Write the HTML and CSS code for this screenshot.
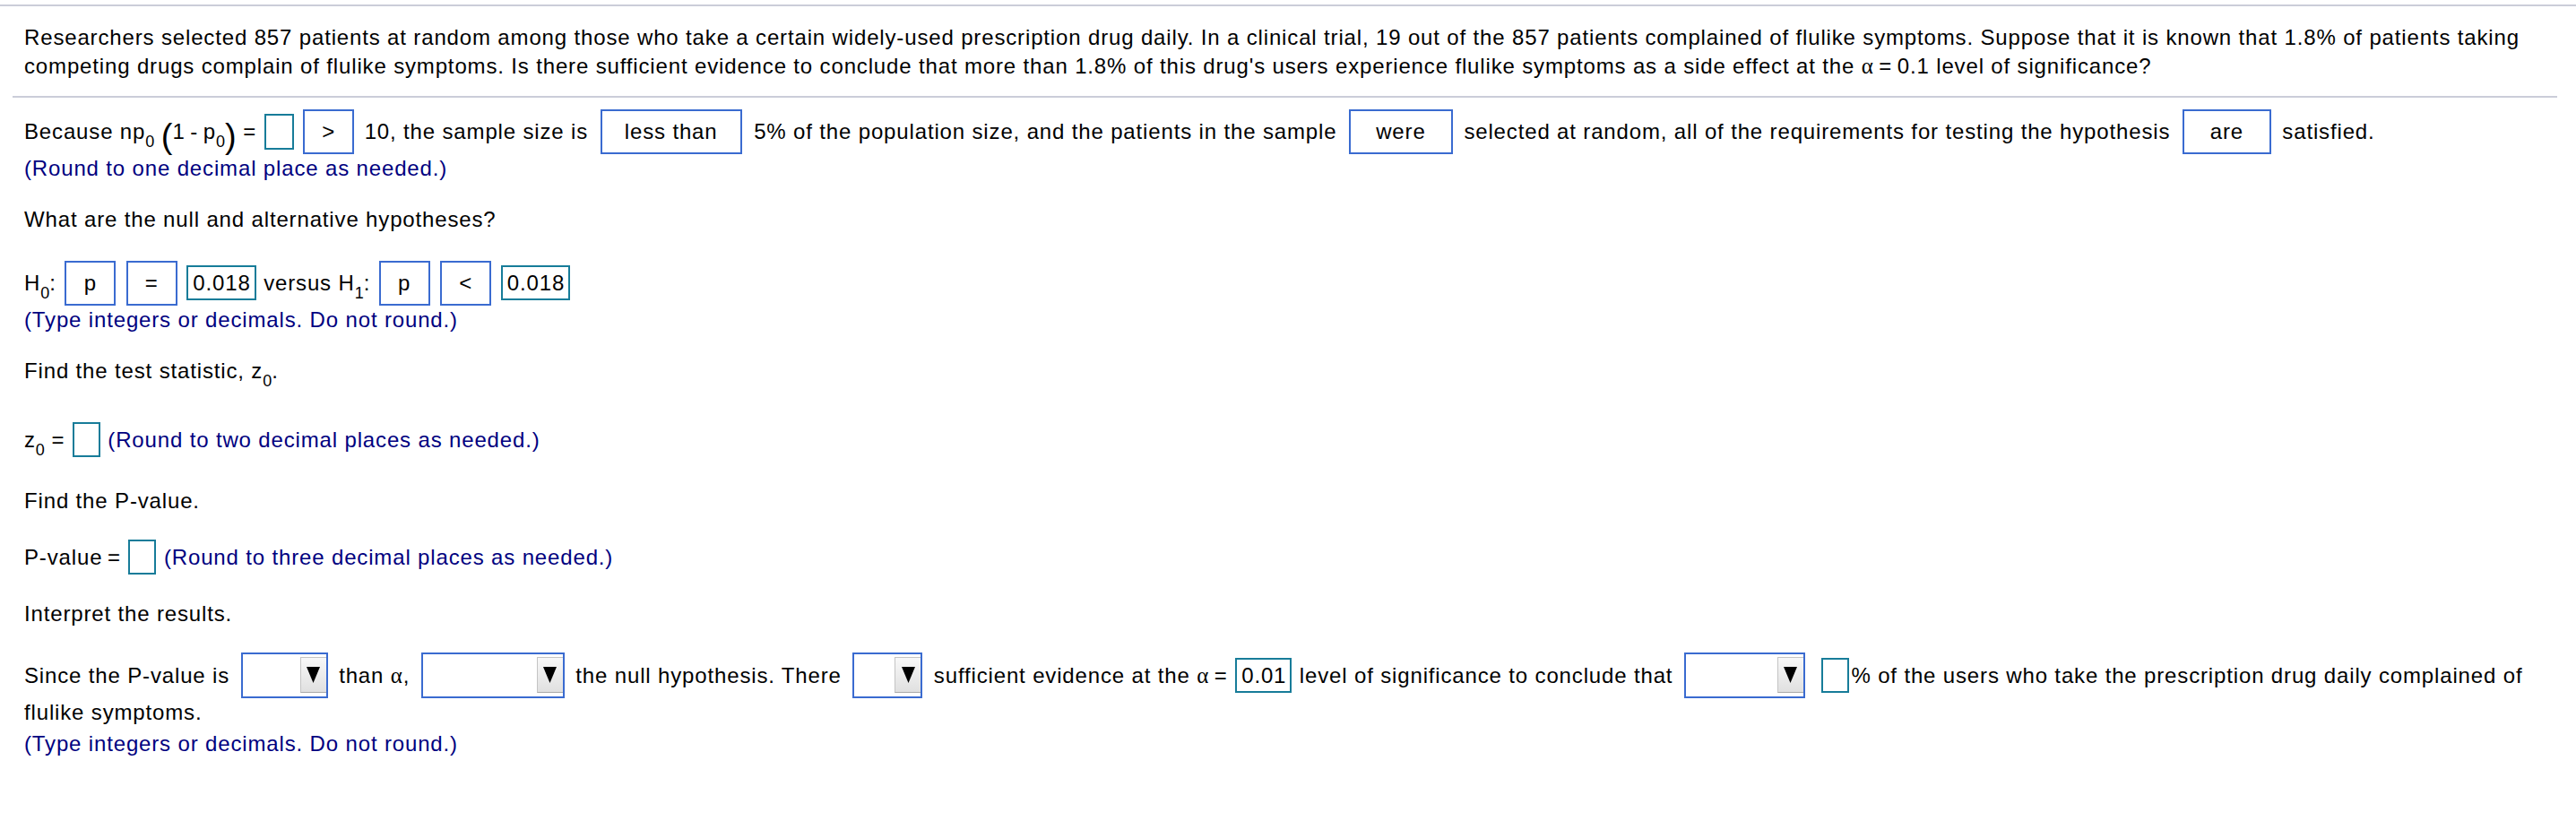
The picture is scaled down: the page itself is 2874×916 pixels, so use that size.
FILE: index.html
```html
<!DOCTYPE html>
<html lang="en">
<head>
<meta charset="utf-8">
<title>Hypothesis test</title>
<link rel="stylesheet" href="styles.css">
</head>
<body>
<div class="topline"></div>
<div class="page">
  <p class="question">Researchers selected 857 patients at random among those who take a certain widely-used prescription drug daily. In a clinical trial, 19 out of the 857 patients complained of flulike symptoms. Suppose that it is known that 1.8% of patients taking competing drugs complain of flulike symptoms. Is there sufficient evidence to conclude that more than 1.8% of this drug's users experience flulike symptoms as a side effect at the <span class="greek">α</span>&#8201;=&#8201;0.1 level of significance?</p>
  <hr class="sep">
  <div class="answers">
    <p class="line row-because">Because np<sub>0</sub> <span class="paren">(</span>1&#8201;-&#8201;p<sub>0</sub><span class="paren">)</span> = <span class="blank blank-lg">&nbsp;</span> <span class="choice w-gt">&gt;</span> 10, the sample size is <span class="choice w-lt">less than</span> 5% of the population size, and the patients in the sample <span class="choice w-were">were</span> selected at random, all of the requirements for testing the hypothesis <span class="choice w-are">are</span> satisfied.</p>
    <p class="line hint">(Round to one decimal place as needed.)</p>

    <p class="line prompt-a">What are the null and alternative hypotheses?</p>
    <p class="line row-hyp">H<sub>0</sub>: <span class="choice w-p">p</span> <span class="choice w-p">=</span> <span class="num">0.018</span> versus H<sub>1</sub>: <span class="choice w-p">p</span> <span class="choice w-p">&lt;</span> <span class="num">0.018</span></p>
    <p class="line hint">(Type integers or decimals. Do not round.)</p>

    <p class="line prompt-b">Find the test statistic, z<sub>0</sub>.</p>
    <p class="line row-z">z<sub>0</sub> = <span class="blank">&nbsp;</span> <span class="hint-inline">(Round to two decimal places as needed.)</span></p>

    <p class="line prompt-c">Find the P-value.</p>
    <p class="line row-p">P-value&#8201;= <span class="blank">&nbsp;</span> <span class="hint-inline">(Round to three decimal places as needed.)</span></p>

    <p class="line prompt-d">Interpret the results.</p>
    <p class="line row-since">Since the P-value is <span class="dd dd-1"><span class="val">&nbsp;</span><span class="btn"><svg width="15" height="20" viewBox="0 0 15 20"><path d="M0 1 H15 L7.5 19 Z" fill="#000"/></svg></span></span> than <span class="greek">α</span>, <span class="dd dd-2"><span class="val">&nbsp;</span><span class="btn"><svg width="15" height="20" viewBox="0 0 15 20"><path d="M0 1 H15 L7.5 19 Z" fill="#000"/></svg></span></span> the null hypothesis. There <span class="dd dd-3"><span class="val">&nbsp;</span><span class="btn"><svg width="15" height="20" viewBox="0 0 15 20"><path d="M0 1 H15 L7.5 19 Z" fill="#000"/></svg></span></span> sufficient evidence at the <span class="greek">α</span>&#8201;= <span class="num">0.01</span> level of significance to conclude that <span class="dd dd-4"><span class="val">&nbsp;</span><span class="btn"><svg width="15" height="20" viewBox="0 0 15 20"><path d="M0 1 H15 L7.5 19 Z" fill="#000"/></svg></span></span> <span class="blank blank-tight">&nbsp;</span>% of the users who take the prescription drug daily complained of flulike symptoms.</p>
    <p class="line hint hint-last">(Type integers or decimals. Do not round.)</p>
  </div>
</div>
</body>
</html>
```

FILE: styles.css
```css
html, body {
  margin: 0;
  padding: 0;
  background: #ffffff;
}

body {
  font-family: "Liberation Sans", Arial, sans-serif;
  font-size: 24px;
  letter-spacing: 0.85px;
  color: #000000;
}

.topline {
  height: 2px;
  margin-top: 5px;
  background: #cbcdd9;
}

.page {
  margin: 0 21px 0 14px;
}

.question {
  margin: 19px 0 0;
  padding: 0 13px;
  line-height: 32px;
}

.sep {
  margin: 17px 0 0;
  border: 0;
  height: 2px;
  background: #cbcdd9;
}

.answers {
  padding: 0 13px;
}

.line {
  margin: 0;
  line-height: 32px;
}

.hint,
.hint-inline {
  color: #000080;
}

.row-because { margin-top: 13px; }
.prompt-a { margin-top: 25px; }
.row-hyp { margin-top: 30px; }
.prompt-b { margin-top: 25px; }
.row-z { margin-top: 41px; }
.prompt-c { margin-top: 33px; }
.row-p { margin-top: 27px; }
.prompt-d { margin-top: 28px; }
.row-since { margin-top: 27px; }
.hint-last { margin-top: 3px; }

sub {
  font-size: 18px;
  vertical-align: -9px;
  line-height: 0;
  letter-spacing: 0;
}

.greek {
  font-family: "Liberation Serif", "Times New Roman", serif;
  font-size: 25px;
}

.paren {
  font-size: 38px;
  vertical-align: -9.5px;
  line-height: 0;
  letter-spacing: 0;
}

/* selected-answer boxes (blue) */
.choice {
  display: inline-block;
  box-sizing: border-box;
  height: 50px;
  line-height: 46px;
  border: 2px solid #3a6bd0;
  text-align: center;
  margin: 0 3px;
}

.w-gt { width: 57px; margin: 0 4px 0 2px; }
.w-lt { width: 158px; margin: 0 6px; }
.w-were { width: 116px; margin: 0 5px 0 6px; }
.w-are { width: 99px; margin: 0 5px 0 6px; }
.w-p { width: 57px; margin: 0 2px; }

/* numeric entries (teal) */
.num {
  display: inline-block;
  box-sizing: border-box;
  height: 39px;
  line-height: 35px;
  padding: 0 4px 0 5px;
  border: 2px solid #177c99;
  margin: 0 1px;
}

.blank {
  display: inline-block;
  box-sizing: border-box;
  width: 31px;
  height: 39px;
  line-height: 35px;
  border: 2px solid #177c99;
  margin: 0 1px;
}

.blank-lg {
  width: 33px;
  height: 40px;
  line-height: 36px;
}

.blank-tight {
  margin: 0 2px 0 6px;
}

/* dropdowns */
.dd {
  display: inline-flex;
  align-items: center;
  box-sizing: border-box;
  height: 51px;
  border: 2px solid #3a6bd0;
  margin: 0 5px;
}

.dd .val {
  flex: 1;
  line-height: 47px;
}

.dd .btn {
  box-sizing: border-box;
  width: 29px;
  height: 40px;
  margin-top: -1px;
  border: 1px solid #c4c4c4;
  border-bottom-color: #a9a9a9;
  border-right: 0;
  background: linear-gradient(#f8f8f8, #e0e0e0);
  display: flex;
  align-items: center;
  justify-content: center;
}

.dd-1 { width: 97px; }
.dd-2 { width: 160px; }
.dd-3 { width: 78px; }
.dd-4 { width: 135px; }
```
